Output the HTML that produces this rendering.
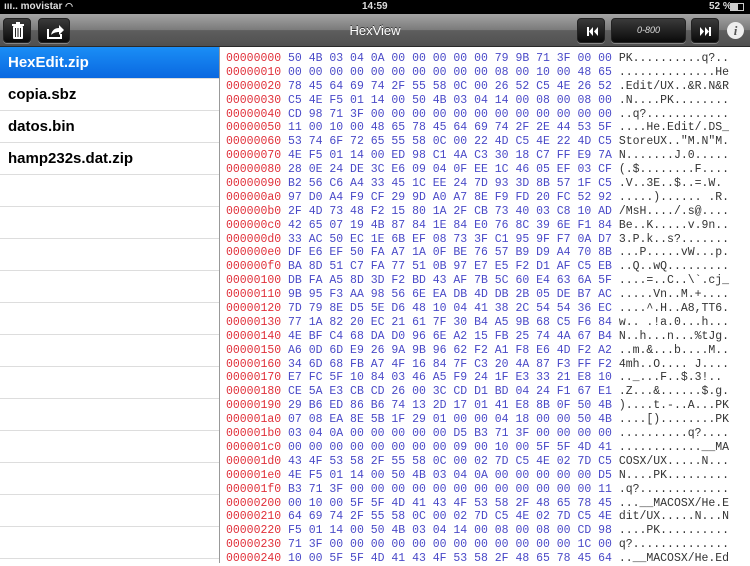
<!DOCTYPE html>
<html><head><meta charset="utf-8"><style>
*{margin:0;padding:0;box-sizing:border-box}
body{width:750px;height:563px;overflow:hidden;background:#fff;font-family:"Liberation Sans",sans-serif;position:relative}
#status{position:absolute;left:0;top:0;width:750px;height:14px;background:#000;color:#ddd;font-size:10px;font-weight:bold}
#tb{position:absolute;left:0;top:14px;width:750px;height:33px;background:linear-gradient(#a4a4a4,#7a7a7a 50%,#5e5e5e 51%,#505050);border-bottom:1px solid #2a2a2a}
.btn{position:absolute;top:4px;height:25px;border-radius:4px;background:linear-gradient(#3a3a3a,#0a0a0a);border:1px solid #222;box-shadow:0 1px 0 rgba(255,255,255,.3)}
#title{position:absolute;left:0;width:750px;top:9px;text-align:center;color:#fff;font-size:13px;text-shadow:0 -1px 0 #333}
#list{position:absolute;left:0;top:47px;width:220px;height:516px;border-right:1px solid #999}
.row{height:32px;border-bottom:1px solid #ddd;font-weight:bold;font-size:15px;line-height:31px;padding-left:8px;color:#000}
.sel{background:linear-gradient(#1a8ef6,#0a68e0);color:#fff}
#hex{position:absolute;left:226px;top:52px;font-family:"Liberation Mono",monospace;font-size:11.5px;line-height:13.89px;white-space:pre;color:#4a4ac8;letter-spacing:-0.01px}
.o{color:#e0303a}.a{color:#333}
</style></head><body>
<div id="status"><span style="position:absolute;left:4px;top:1px">ııı.. movistar <span style="font-size:9px">◠</span></span><span style="position:absolute;left:362px;top:1px">14:59</span><span style="position:absolute;left:709px;top:1px">52 %</span><span style="position:absolute;left:730px;top:3px;width:14px;height:8px;border:1px solid #ccc;"><span style="display:block;width:7px;height:6px;background:#ccc"></span></span></div>
<div id="tb">
<div class="btn" style="left:3px;width:28px"><svg width="28" height="25" viewBox="0 0 28 25"><rect x="9" y="7" width="10" height="13" rx="1" fill="#fff"/><rect x="8" y="5" width="12" height="2" fill="#fff"/><rect x="12" y="3" width="4" height="2" fill="#fff"/><path d="M11.5 9v9M14 9v9M16.5 9v9" stroke="#222" stroke-width="1"/></svg></div>
<div class="btn" style="left:38px;width:32px"><svg width="32" height="25" viewBox="0 0 32 25"><path d="M9 10v9h13v-4" fill="none" stroke="#fff" stroke-width="2"/><path d="M12 16c1-5 4-7 8-7v-3l5 5-5 5v-3c-3 0-6 1-8 3z" fill="#fff"/></svg></div>
<div id="title">HexView</div>
<div class="btn" style="left:577px;width:28px"><svg width="28" height="25"><rect x="9" y="8" width="2" height="9" fill="#fff"/><path d="M15 8v9l-4-4.5zM20 8v9l-4-4.5z" fill="#fff"/></svg></div>
<div class="btn" style="left:611px;width:75px;color:#ddd;font-size:9px;font-style:italic;text-align:center;line-height:23px">0-800</div>
<div class="btn" style="left:691px;width:28px"><svg width="28" height="25"><path d="M8 8v9l4-4.5zM13 8v9l4-4.5z" fill="#fff"/><rect x="17" y="8" width="2" height="9" fill="#fff"/></svg></div>
<div style="position:absolute;left:727px;top:8px;width:17px;height:17px;border-radius:50%;background:#eee;color:#555;font:bold italic 13px 'Liberation Serif',serif;text-align:center;line-height:17px">i</div>
</div>
<div id="list">
<div class="row sel">HexEdit.zip</div><div class="row">copia.sbz</div><div class="row">datos.bin</div><div class="row">hamp232s.dat.zip</div><div class="row"></div><div class="row"></div><div class="row"></div><div class="row"></div><div class="row"></div><div class="row"></div><div class="row"></div><div class="row"></div><div class="row"></div><div class="row"></div><div class="row"></div><div class="row"></div>
</div>
<div id="hex"><span class="o">00000000</span> 50 4B 03 04 0A 00 00 00 00 00 79 9B 71 3F 00 00 <span class="a">PK..........q?..</span>
<span class="o">00000010</span> 00 00 00 00 00 00 00 00 00 00 08 00 10 00 48 65 <span class="a">..............He</span>
<span class="o">00000020</span> 78 45 64 69 74 2F 55 58 0C 00 26 52 C5 4E 26 52 <span class="a">.Edit/UX..&amp;R.N&amp;R</span>
<span class="o">00000030</span> C5 4E F5 01 14 00 50 4B 03 04 14 00 08 00 08 00 <span class="a">.N....PK........</span>
<span class="o">00000040</span> CD 98 71 3F 00 00 00 00 00 00 00 00 00 00 00 00 <span class="a">..q?............</span>
<span class="o">00000050</span> 11 00 10 00 48 65 78 45 64 69 74 2F 2E 44 53 5F <span class="a">....He.Edit/.DS_</span>
<span class="o">00000060</span> 53 74 6F 72 65 55 58 0C 00 22 4D C5 4E 22 4D C5 <span class="a">StoreUX.."M.N"M.</span>
<span class="o">00000070</span> 4E F5 01 14 00 ED 98 C1 4A C3 30 18 C7 FF E9 7A <span class="a">N.......J.0.....</span>
<span class="o">00000080</span> 28 0E 24 DE 3C E6 09 04 0F EE 1C 46 05 EF 03 CF <span class="a">(.$........F....</span>
<span class="o">00000090</span> B2 56 C6 A4 33 45 1C EE 24 7D 93 3D 8B 57 1F C5 <span class="a">.V..3E..$..=.W. </span>
<span class="o">000000a0</span> 97 D0 A4 F9 CF 29 9D A0 A7 8E F9 FD 20 FC 52 92 <span class="a">.....)...... .R.</span>
<span class="o">000000b0</span> 2F 4D 73 48 F2 15 80 1A 2F CB 73 40 03 C8 10 AD <span class="a">/MsH..../.s@....</span>
<span class="o">000000c0</span> 42 65 07 19 4B 87 84 1E 84 E0 76 8C 39 6E F1 84 <span class="a">Be..K.....v.9n..</span>
<span class="o">000000d0</span> 33 AC 50 EC 1E 6B EF 08 73 3F C1 95 9F F7 0A D7 <span class="a">3.P.k..s?.......</span>
<span class="o">000000e0</span> DF E6 EF 50 FA A7 1A 0F BE 76 57 B9 D9 A4 70 8B <span class="a">...P.....vW...p.</span>
<span class="o">000000f0</span> BA 8D 51 C7 FA 77 51 0B 97 E7 E5 F2 D1 AF C5 EB <span class="a">..Q..wQ.........</span>
<span class="o">00000100</span> DB FA A5 8D 3D F2 BD 43 AF 7B 5C 60 E4 63 6A 5F <span class="a">....=..C..\`.cj_</span>
<span class="o">00000110</span> 9B 95 F3 AA 98 56 6E EA DB 4D DB 2B 05 DE B7 AC <span class="a">.....Vn..M.+....</span>
<span class="o">00000120</span> 7D 79 8E D5 5E D6 48 10 04 41 38 2C 54 54 36 EC <span class="a">....^.H..A8,TT6.</span>
<span class="o">00000130</span> 77 1A 82 20 EC 21 61 7F 30 B4 A5 9B 68 C5 F6 84 <span class="a">w.. .!a.0...h...</span>
<span class="o">00000140</span> 4E BF C4 68 DA D0 96 6E A2 15 FB 25 74 4A 67 B4 <span class="a">N..h...n...%tJg.</span>
<span class="o">00000150</span> A6 0D 6D E9 26 9A 9B 96 62 F2 A1 F8 E6 4D F2 A2 <span class="a">..m.&amp;...b....M..</span>
<span class="o">00000160</span> 34 6D 68 FB A7 4F 16 84 7F C3 20 4A 87 F3 FF F2 <span class="a">4mh..O.... J....</span>
<span class="o">00000170</span> E7 FC 5F 10 84 03 46 A5 F9 24 1F E3 33 21 E8 10 <span class="a">.._...F..$.3!..</span>
<span class="o">00000180</span> CE 5A E3 CB CD 26 00 3C CD D1 BD 04 24 F1 67 E1 <span class="a">.Z...&amp;......$.g.</span>
<span class="o">00000190</span> 29 B6 ED 86 B6 74 13 2D 17 01 41 E8 8B 0F 50 4B <span class="a">)....t.-..A...PK</span>
<span class="o">000001a0</span> 07 08 EA 8E 5B 1F 29 01 00 00 04 18 00 00 50 4B <span class="a">....[)........PK</span>
<span class="o">000001b0</span> 03 04 0A 00 00 00 00 00 D5 B3 71 3F 00 00 00 00 <span class="a">..........q?....</span>
<span class="o">000001c0</span> 00 00 00 00 00 00 00 00 09 00 10 00 5F 5F 4D 41 <span class="a">............__MA</span>
<span class="o">000001d0</span> 43 4F 53 58 2F 55 58 0C 00 02 7D C5 4E 02 7D C5 <span class="a">COSX/UX.....N...</span>
<span class="o">000001e0</span> 4E F5 01 14 00 50 4B 03 04 0A 00 00 00 00 00 D5 <span class="a">N....PK.........</span>
<span class="o">000001f0</span> B3 71 3F 00 00 00 00 00 00 00 00 00 00 00 00 11 <span class="a">.q?.............</span>
<span class="o">00000200</span> 00 10 00 5F 5F 4D 41 43 4F 53 58 2F 48 65 78 45 <span class="a">...__MACOSX/He.E</span>
<span class="o">00000210</span> 64 69 74 2F 55 58 0C 00 02 7D C5 4E 02 7D C5 4E <span class="a">dit/UX.....N...N</span>
<span class="o">00000220</span> F5 01 14 00 50 4B 03 04 14 00 08 00 08 00 CD 98 <span class="a">....PK..........</span>
<span class="o">00000230</span> 71 3F 00 00 00 00 00 00 00 00 00 00 00 00 1C 00 <span class="a">q?..............</span>
<span class="o">00000240</span> 10 00 5F 5F 4D 41 43 4F 53 58 2F 48 65 78 45 64 <span class="a">..__MACOSX/He.Ed</span></div>
</body></html>
